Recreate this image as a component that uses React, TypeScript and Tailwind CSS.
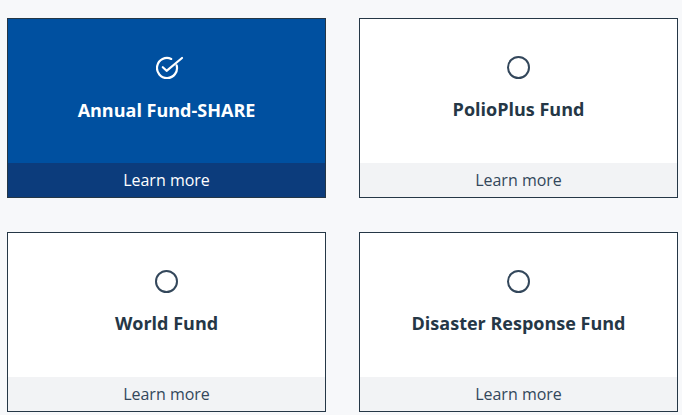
const funds = [
  { name: "Annual Fund-SHARE", selected: true },
  { name: "PolioPlus Fund", selected: false },
  { name: "World Fund", selected: false },
  { name: "Disaster Response Fund", selected: false },
];

// open circle with a check that runs out past the top-right edge
const CheckCircle = () => (
  <svg
    viewBox="0 0 28 24"
    className="w-[28px] h-[24px] ml-[6px] text-white"
    fill="none"
    stroke="currentColor"
    strokeWidth={2.2}
    strokeLinecap="round"
    strokeLinejoin="round"
  >
    <path d="M20.66 9.41A10 10 0 1 1 15.23 2.94" />
    <path d="M6.8 11.2L10.6 14.8L26 2" />
  </svg>
);

const FundCard = ({ name, selected }: { name: string; selected: boolean }) => (
  <div
    className={`flex flex-col h-[180px] border border-[#253746] ${
      selected ? "bg-[#0050a0]" : "bg-white"
    }`}
  >
    <div className="flex-1 flex flex-col items-center pt-[37px]">
      {selected ? (
        <CheckCircle />
      ) : (
        <div className="w-[23px] h-[23px] rounded-full border-2 border-[#33475b]" />
      )}
      <h3
        className={`mt-[18px] text-[18px] leading-6 font-bold ${
          selected ? "text-white" : "text-[#253746]"
        }`}
      >
        {name}
      </h3>
    </div>
    <div
      className={`h-[34px] flex items-center justify-center text-[16px] ${
        selected ? "bg-[#0c3c7c] text-white" : "bg-[#f2f3f5] text-[#33475b]"
      }`}
    >
      Learn more
    </div>
  </div>
);

export default function App() {
  return (
    <div
      className="w-full h-[415px] bg-[#f7f8fa] pl-[7px] pt-[18px]"
      style={{ fontFamily: '"Open Sans", sans-serif' }}
    >
      <div className="grid grid-cols-[319px_319px] gap-x-[33px] gap-y-[34px]">
        {funds.map((f) => (
          <FundCard key={f.name} name={f.name} selected={f.selected} />
        ))}
      </div>
    </div>
  );
}
